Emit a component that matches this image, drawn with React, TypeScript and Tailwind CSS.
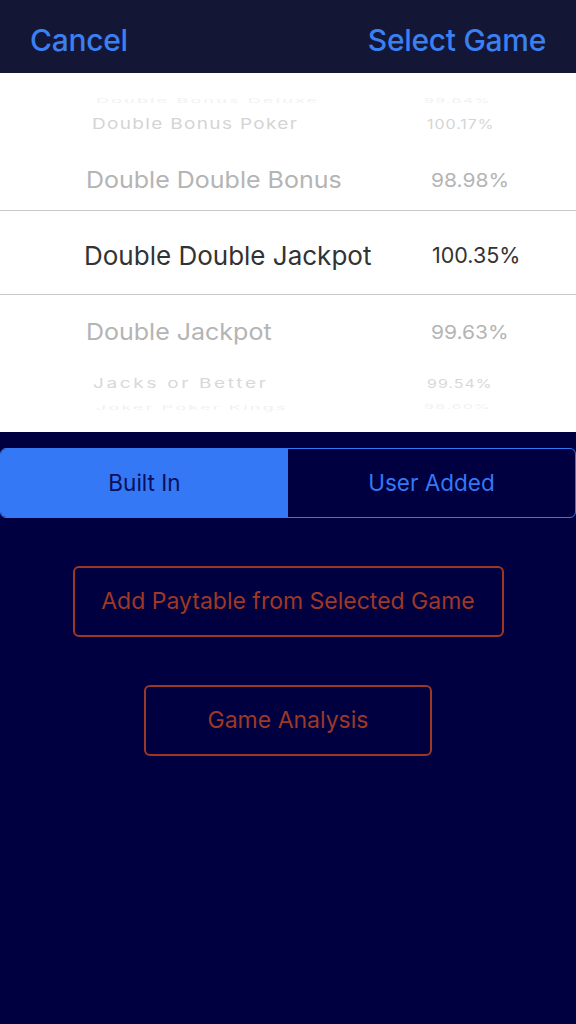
type Row = {
  name: string;
  pct: string;
  h: string;
  nameCls: string;
  pctCls: string;
  pl: string;
  pctPl: string;
  pad?: string;
};

const above: Row[] = [
  { name: "Double Bonus Deluxe", pct: "99.64%", h: "h-[33px]", pad: "pt-[22px]", nameCls: "text-[18px] text-[#f1f1f1] tracking-[0.12em] scale-y-[0.35]", pctCls: "text-[16px] text-[#f1f1f1] tracking-[0.08em] scale-y-[0.35]", pl: "pl-[96px]", pctPl: "pl-[424px]" },
  { name: "Double Bonus Poker", pct: "100.17%", h: "h-[44px]", pad: "pb-[8px]", nameCls: "text-[19px] text-[#d4d4d4] tracking-[0.07em] scale-y-[0.78]", pctCls: "text-[16px] text-[#d4d4d4] tracking-[0.06em] scale-y-[0.78]", pl: "pl-[92px]", pctPl: "pl-[427px]" },
  { name: "Double Double Bonus", pct: "98.98%", h: "h-[60px]", pad: "pt-[2px]", nameCls: "text-[25px] text-[#b4b4b4] scale-y-[0.92]", pctCls: "text-[21px] text-[#b4b4b4] scale-y-[0.92]", pl: "pl-[86px]", pctPl: "pl-[431px]" },
];

const below: Row[] = [
  { name: "Double Jackpot", pct: "99.63%", h: "h-[72px]", pad: "pt-[4px]", nameCls: "text-[25px] text-[#b4b4b4] scale-y-[0.92]", pctCls: "text-[21px] text-[#b4b4b4] scale-y-[0.92]", pl: "pl-[86px]", pctPl: "pl-[431px]" },
  { name: "Jacks or Better", pct: "99.54%", h: "h-[34px]", nameCls: "text-[19px] text-[#d8d8d8] tracking-[0.14em] scale-y-[0.72]", pctCls: "text-[16px] text-[#d8d8d8] tracking-[0.06em] scale-y-[0.72]", pl: "pl-[93px]", pctPl: "pl-[427px]" },
  { name: "Joker Poker Kings", pct: "98.60%", h: "h-[26px]", pad: "pb-[14px]", nameCls: "text-[18px] text-[#f1f1f1] tracking-[0.12em] scale-y-[0.35]", pctCls: "text-[16px] text-[#f1f1f1] tracking-[0.08em] scale-y-[0.35]", pl: "pl-[96px]", pctPl: "pl-[424px]" },
];

function PickerRow({ r }: { r: Row }) {
  return (
    <div className={`relative flex items-center ${r.h} ${r.pad ?? ""} shrink-0`}>
      <span className={`absolute ${r.pl} whitespace-nowrap ${r.nameCls}`}>{r.name}</span>
      <span className={`absolute ${r.pctPl} whitespace-nowrap ${r.pctCls}`}>{r.pct}</span>
    </div>
  );
}

export default function App() {
  return (
    <div className="w-[576px] h-[1024px] bg-[#000040] flex flex-col" style={{ fontFamily: "Inter, 'Noto Sans', sans-serif" }}>
      {/* nav bar */}
      <div className="h-[73px] bg-[#141635] flex items-center justify-between px-[30px] pt-[8px] shrink-0">
        <span className="text-[30px] font-medium text-[#3a80f2] tracking-[-0.01em]">Cancel</span>
        <span className="text-[30px] font-medium text-[#3a80f2] tracking-[-0.01em]">Select Game</span>
      </div>

      {/* picker wheel */}
      <div className="h-[359px] bg-white flex flex-col overflow-hidden shrink-0">
        {above.map((r) => (
          <PickerRow key={r.name} r={r} />
        ))}
        <div className="h-[85px] shrink-0 border-y border-[#c9c9c9] flex items-center relative pt-[6px]">
          <span className="absolute pl-[84px] text-[26px] text-[#333333] whitespace-nowrap">Double Double Jackpot</span>
          <span className="absolute pl-[432px] text-[21.5px] text-[#333333] whitespace-nowrap">100.35%</span>
        </div>
        {below.map((r) => (
          <PickerRow key={r.name} r={r} />
        ))}
      </div>

      {/* segmented control */}
      <div className="mt-[16px] h-[70px] flex rounded-[6px] border border-[#3478f6] overflow-hidden shrink-0">
        <div className="flex-1 bg-[#3478f6] flex items-center justify-center text-[22.5px] text-[#0b0f5c]">Built In</div>
        <div className="flex-1 flex items-center justify-center text-[22.5px] text-[#3478f6]">User Added</div>
      </div>

      {/* actions */}
      <div className="flex flex-col items-center mt-[48px] gap-[48px]">
        <button className="w-[431px] h-[71px] rounded-[6px] border-2 border-[#9e3826] text-[23px] text-[#9e3826]">
          Add Paytable from Selected Game
        </button>
        <button className="w-[288px] h-[71px] rounded-[6px] border-2 border-[#9e3826] text-[23px] text-[#9e3826]">
          Game Analysis
        </button>
      </div>
    </div>
  );
}
